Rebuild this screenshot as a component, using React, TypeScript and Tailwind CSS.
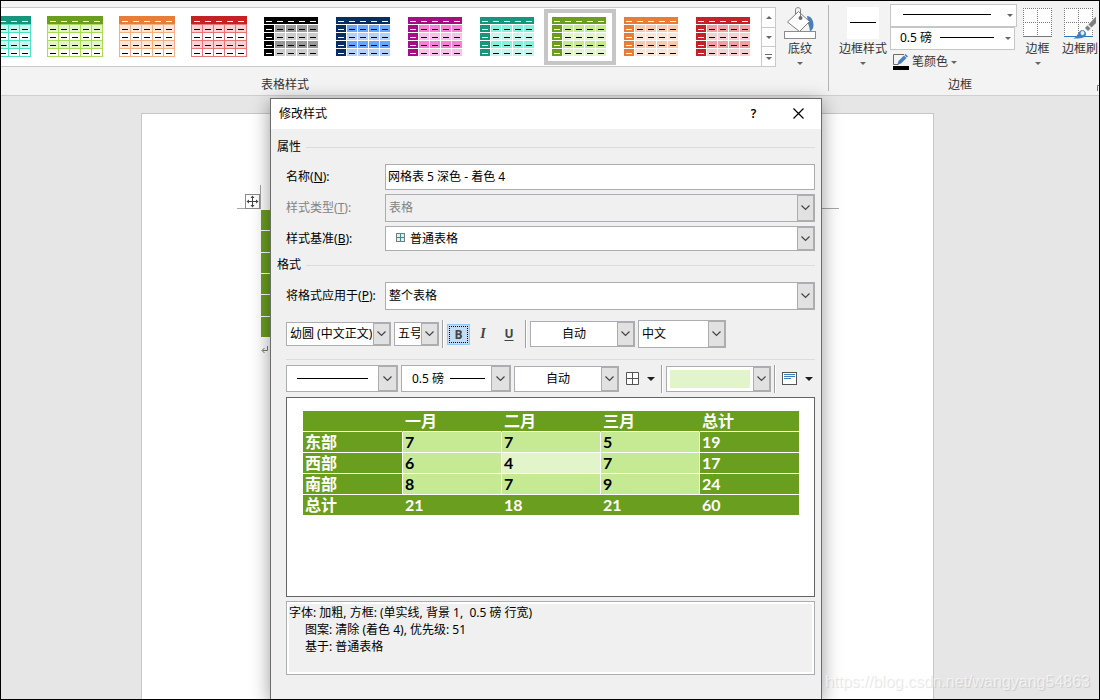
import React from "react";
import clsx from "clsx";

const tableStyles = [
  { id: "t3", kind: "list", main: "#16967d", line: "#4fe0c6", dark: "#c8f5ec", light: "#ffffff" },
  { id: "g3", kind: "list", main: "#6a9e1f", line: "#a9dc5a", dark: "#e2f4ca", light: "#ffffff" },
  { id: "o3", kind: "list", main: "#e87d37", line: "#f1b186", dark: "#fbe5d7", light: "#ffffff" },
  { id: "r3", kind: "list", main: "#c42224", line: "#e57779", dark: "#f7d1d1", light: "#ffffff" },
  { id: "k5", kind: "grid", main: "#000000", dark: "#999999", light: "#cccccc" },
  { id: "b5", kind: "grid", main: "#052f61", dark: "#64a7fb", light: "#b1d2fd" },
  { id: "m5", kind: "grid", main: "#a50e82", dark: "#f481d9", light: "#f9c0ec" },
  { id: "t5", kind: "grid", main: "#16967d", dark: "#89efdd", light: "#c4f7ee" },
  { id: "g5", kind: "grid", main: "#6a9e1f", dark: "#c6ea94", light: "#e2f4ca" },
  { id: "o5", kind: "grid", main: "#e87d37", dark: "#f6cbae", light: "#fbe5d7" },
  { id: "r5", kind: "grid", main: "#c42224", dark: "#efa1a2", light: "#f7d0d1" },
];

const five = [0, 1, 2, 3, 4];
const four = [0, 1, 2, 3];

const StyleThumb = ({ style }: { style: (typeof tableStyles)[number] }) => {
  const grid = style.kind === "grid";
  return (
    <svg width="56" height="41" viewBox="0 0 56 41" shapeRendering="crispEdges">
      {grid ? (
        <>
          <rect x="1" y="1" width="54" height="7" fill={style.main} />
          {four.map((r) =>
            five.map((c) => (
              <rect
                key={`${r}-${c}`}
                x={1 + c * 11}
                y={9 + r * 8}
                width="10"
                height="7"
                fill={c === 0 ? style.main : r % 2 ? style.light : style.dark}
              />
            ))
          )}
        </>
      ) : (
        <>
          <rect width="56" height="41" fill={style.line} />
          {four.map((r) =>
            five.map((c) => (
              <rect
                key={`${r}-${c}`}
                x={1 + c * 11}
                y={9 + r * 8}
                width="10"
                height="7"
                fill={r % 2 ? style.light : style.dark}
              />
            ))
          )}
          <rect width="56" height="8" fill={style.main} />
        </>
      )}
      {five.map((c) => (
        <g key={c}>
          <rect x={3 + c * 11} y="5" width="6" height="1" fill="#fff" />
          {four.map((r) => (
            <rect
              key={r}
              x={3 + c * 11}
              y={13 + r * 8}
              width="6"
              height="1"
              fill={grid && c === 0 ? "#fff" : "#000"}
            />
          ))}
        </g>
      ))}
    </svg>
  );
};

const SmallArrow = ({ className }: { className?: string }) => (
  <svg width="6" height="3" viewBox="0 0 6 3" className={className} fill="#666">
    <path d="M0 0h6L3 3z" />
  </svg>
);

const BigArrow = () => (
  <svg width="8" height="4" viewBox="0 0 8 4" fill="#1e1e1e">
    <path d="M0 0h8L4 4z" />
  </svg>
);

const BucketIcon = () => (
  <svg width="32" height="32" viewBox="0 0 32 32" fill="none">
    <path d="M23 9c4 0 6.500 4 6.500 9 0 3-1 5-3.500 6.500-.5-2.500-.5-5-2-8z" fill="#4a7ebb" />
    <path d="M14.500 4.500L25.500 14.500 15.500 24.500 3.500 15z" fill="#fff" stroke="#7f7f7f" />
    <path d="M11.500 7V2.500c0-2.500 5-2.500 5 0V10" stroke="#7f7f7f" />
    <circle cx="16.500" cy="11" r="2" fill="#6b6b6b" />
    <rect x="0.500" y="24.500" width="31" height="7" fill="#fff" stroke="#8c8c8c" />
  </svg>
);

const BorderStyleIcon = () => (
  <svg width="32" height="32" viewBox="0 0 32 32" shapeRendering="crispEdges">
    <rect width="32" height="32" fill="#fff" />
    <rect x="3" y="15" width="26" height="1" fill="#000" />
  </svg>
);

const DottedGrid = ({ base }: { base: string }) => (
  <g shapeRendering="crispEdges">
    <rect width="29" height="29" y="1" fill="#fff" />
    <path
      d="M0 1.500h29M.5 1v28M28.500 1v28M0 15.500h29M14.500 1v28"
      stroke="#7c7c7c"
      strokeDasharray="1 1"
      fill="none"
    />
    <rect y="29" width="29" height="1" fill={base} />
  </g>
);

const BordersIcon = () => (
  <svg width="29" height="32" viewBox="0 0 29 32">
    <DottedGrid base="#777" />
  </svg>
);

const BorderPainterIcon = () => (
  <svg width="33" height="32" viewBox="0 0 33 32">
    <DottedGrid base="#2e75b6" />
    <path d="M33 8v10l-8 8-5-5z" fill="#f3f3f3" />
    <path d="M32 9.500v6.500l-4.500 4.500L24.500 17.500z" fill="#7f7f7f" />
    <path d="M23.500 18.500l3 3-2.500 2.500-3-3z" fill="#7f7f7f" />
    <path
      d="M9 31.500c4-1 4.500-5 7-7.500 2-1.500 6.500 0 6 3.500-.5 3-5 4.500-13 4z"
      fill="#3f7fc0"
    />
    <circle cx="18.500" cy="26" r="2.500" fill="#e4effa" stroke="#3f7fc0" />
  </svg>
);

const PenColorIcon = () => (
  <svg width="16" height="16" viewBox="0 0 16 16">
    <path d="M11 .5H.5v10h5" fill="none" stroke="#6b6b6b" />
    <path d="M4.500 10.500l1-3.500L11 1.500l2.500 2.500L8 9.500z" fill="#4a7ebb" />
    <path d="M12 .5l2.500 2.500" stroke="#4a7ebb" strokeWidth="1.500" />
    <rect y="12" width="16" height="4" fill="#000" />
  </svg>
);

const RibbonButton = ({
  icon,
  label,
  arrow = true,
  className,
}: {
  icon: React.ReactNode;
  label: string;
  arrow?: boolean;
  className?: string;
}) => (
  <button className={clsx("mt-[6px] flex shrink-0 flex-col items-center", className)}>
    <span className="flex h-8 justify-center">{icon}</span>
    <span className="mt-[2px] whitespace-nowrap leading-4">{label}</span>
    {arrow && <SmallArrow className="mt-[5px]" />}
  </button>
);

const Ribbon = () => (
  <div className="flex h-[95px] shrink-0 border-b border-[#cfcfcf] bg-[#f3f3f3] text-[#333]">
    <div className="flex min-w-0 flex-1 flex-col">
      <div className="flex h-[76px] items-start">
        <div className="mt-[6px] flex h-[60px] min-w-0 flex-1 border border-l-0 border-[#c9c9c9] bg-white">
          <div className="flex min-w-0 flex-1 justify-end overflow-hidden pt-px pr-px">
            {tableStyles.map((s) => (
              <button
                key={s.id}
                aria-label={s.id}
                className={clsx(
                  "flex h-14 w-[72px] shrink-0 pt-[7px] pl-[7px]",
                  s.id === "g5" && "ring-4 ring-[#c6c6c6] ring-inset"
                )}
              >
                <StyleThumb style={s} />
              </button>
            ))}
          </div>
          <div className="flex w-[14px] shrink-0 flex-col border-l border-[#c9c9c9]">
            <button aria-label="上一行" className="flex flex-1 items-center justify-center border-b border-[#c9c9c9]">
              <SmallArrow className="rotate-180" />
            </button>
            <button aria-label="下一行" className="flex flex-1 items-center justify-center border-b border-[#c9c9c9]">
              <SmallArrow />
            </button>
            <button aria-label="其他" className="flex flex-1 flex-col items-center justify-center gap-[2px]">
              <span className="h-px w-[7px] bg-[#6b6b6b]" />
              <SmallArrow />
            </button>
          </div>
        </div>
        <RibbonButton icon={<BucketIcon />} label="底纹" className="mr-1 w-12" />
      </div>
      <div className="pl-[260px] leading-4">表格样式</div>
    </div>
    <div className="my-1 w-px bg-[#b5b5b5]" />
    <div className="flex w-[270px] shrink-0 flex-col overflow-hidden">
      <div className="flex h-[76px] items-start">
        <RibbonButton icon={<BorderStyleIcon />} label="边框样式" className="ml-[9px] w-[50px]" />
        <div className="mt-[3px] ml-[2px] w-[127px] shrink-0">
          <div className="relative">
            <select aria-label="笔样式" className="block h-[23px] w-full appearance-none border border-[#c6c6c6] bg-white">
              <option value="single"></option>
            </select>
            <span className="pointer-events-none absolute top-[10px] left-[13px] h-px w-[88px] bg-black" />
            <SmallArrow className="pointer-events-none absolute top-[10px] right-1" />
          </div>
          <div className="relative mr-[2px]">
            <select aria-label="笔划粗细" className="block h-[23px] w-full appearance-none border border-[#c6c6c6] bg-white pb-px pl-[9px] leading-4 text-black">
              <option>0.5 磅</option>
            </select>
            <span className="pointer-events-none absolute top-[10px] left-[50px] h-px w-[54px] bg-black" />
            <SmallArrow className="pointer-events-none absolute top-[10px] right-1" />
          </div>
          <button className="mt-[3px] ml-[3px] flex items-center gap-[3px] leading-[18px]">
            <PenColorIcon />
            笔颜色
            <SmallArrow />
          </button>
        </div>
        <RibbonButton icon={<BordersIcon />} label="边框" className="ml-[6px] w-[29px]" />
        <RibbonButton icon={<BorderPainterIcon />} label="边框刷" arrow={false} className="ml-[10px] w-9" />
      </div>
      <div className="flex pl-[119px] leading-4">
        边框
        <svg width="5" height="6" viewBox="0 0 5 6" fill="none" stroke="#777" className="mt-2 ml-auto">
          <path d="M3.500 6V.5H5" />
        </svg>
      </div>
    </div>
  </div>
);

const DocumentPage = () => (
  <div className="relative mt-[17px] mr-[165px] ml-[140px] flex-1 border border-b-0 border-[#c6c6c6] bg-white pt-24 pl-[119px]">
    {/* crop marks and the table move handle */}
    <span className="absolute top-[71px] left-[118px] h-[24px] w-px bg-[#a6a6a6]" />
    <span className="absolute top-[94px] left-[95px] h-px w-[24px] bg-[#a6a6a6]" />
    <span className="absolute top-[94px] right-[94px] h-px w-[24px] bg-[#a6a6a6]" />
    <svg
      width="15"
      height="15"
      viewBox="0 0 15 15"
      fill="none"
      className="absolute top-[80px] left-[103px]"
    >
      <rect x="0.500" y="0.500" width="14" height="14" fill="#fff" stroke="#8a8a8a" />
      <path d="M7.500 3v9M3 7.500h9" stroke="#444" />
      <path d="M7.500 1.500l2 2.500h-4zM7.500 13.500l2-2.500h-4zM1.500 7.500l2.500-2v4zM13.500 7.500l-2.500-2v4z" fill="#444" />
    </svg>
    <div className="mr-[118px] flex h-[127px] flex-col gap-px">
      {[0, 1, 2, 3, 4, 5].map((r) => (
        <div key={r} className="flex-1 bg-[#6a9e1f]" />
      ))}
    </div>
    <svg width="9" height="8" viewBox="0 0 9 8" fill="none" stroke="#777" className="mt-[9px]">
      <path d="M6.500 0v4.500H1.500M3.500 2L1 4.500 3.500 7" />
    </svg>
  </div>
);

const Combo = ({
  label,
  id,
  value,
  className,
  selectClass = "pl-[3px]",
  disabled,
  wideArrow,
  children,
}: {
  label?: string;
  id?: string;
  value: string;
  className: string;
  selectClass?: string;
  disabled?: boolean;
  wideArrow?: boolean;
  children?: React.ReactNode;
}) => (
  <div className={clsx("relative", className)}>
    <select
      id={id}
      aria-label={label}
      disabled={disabled}
      className={clsx(
        "block h-full w-full appearance-none border border-[#abadb3] pr-[18px] leading-4 disabled:opacity-100",
        disabled ? "bg-[#f0f0f0] text-[#838383]" : "bg-white text-black",
        selectClass
      )}
    >
      <option>{value}</option>
    </select>
    {children}
    <span
      className={clsx(
        "pointer-events-none absolute top-px right-0 bottom-0 flex items-center justify-center border border-r-2 border-b-2 border-[#adadad] bg-[#e1e1e1]",
        wideArrow ? "w-5" : "w-[18px]"
      )}
    >
      <svg width="9" height="6" viewBox="0 0 9 6" fill="none" stroke="#444" strokeWidth="1.200">
        <path d="M.5 .5l4 4 4-4" />
      </svg>
    </span>
  </div>
);

const Heading = ({ children }: { children: React.ReactNode }) => (
  <div className="flex items-center gap-[5px] pl-[6px]">
    <h2 className="leading-[18px]">{children}</h2>
    <span className="h-px flex-1 bg-[#dcdcdc]" />
  </div>
);

const FieldLabel = ({
  htmlFor,
  text,
  hotkey,
  className,
}: {
  htmlFor: string;
  text: string;
  hotkey: string;
  className?: string;
}) => (
  <label htmlFor={htmlFor} className={clsx("w-[99px] shrink-0 whitespace-nowrap leading-4", className)}>
    {text}(<span className="underline">{hotkey}</span>):
  </label>
);

const Divider = () => <span className="h-7 w-[2px] border-l border-[#a0a0a0] bg-white" />;

const previewRows = [
  ["", "一月", "二月", "三月", "总计"],
  ["东部", "7", "7", "5", "19"],
  ["西部", "6", "4", "7", "17"],
  ["南部", "8", "7", "9", "24"],
  ["总计", "21", "18", "21", "60"],
];

const Preview = () => (
  <div className="mt-[5px] h-[200px] border border-[#646464] bg-white pt-[13px] pr-[15px] pl-4">
    <table className="w-full table-fixed border-separate border-spacing-0 font-['Lato','Noto_Sans_CJK_SC',sans-serif] text-base leading-5 font-bold">
      <colgroup>
        <col className="w-[99px]" />
        <col className="w-[99px]" />
        <col className="w-[99px]" />
        <col className="w-[99px]" />
        <col />
      </colgroup>
      <tbody>
        {previewRows.map((row, r) => (
          <tr key={r}>
            {row.map((cell, c) => {
              const body = r > 0 && r < 4 && c > 0 && c < 4;
              return (
                <td
                  key={c}
                  className={clsx(
                    "h-5 p-0",
                    r < 4 && "border-b border-b-white",
                    c > 0 && "border-l",
                    "pl-[2px]",
                    r > 0 && r < 4 ? "border-l-white" : "border-l-[#6a9e1f]",
                    body ? "text-black" : "bg-[#6a9e1f] text-white",
                    body && (r === 2 && c === 2 ? "bg-[#e2f4ca]" : "bg-[#c6ea94]")
                  )}
                >
                  {cell}
                </td>
              );
            })}
          </tr>
        ))}
      </tbody>
    </table>
  </div>
);

const ModifyStyleDialog = () => (
  <div
    role="dialog"
    aria-label="修改样式"
    className="absolute top-[97px] bottom-0 left-[269px] w-[552px] border border-b-0 border-[#6b6b6b] bg-[#f0f0f0] text-black shadow-[0_4px_18px_rgba(0,0,0,0.4)]"
  >
    <div className="flex h-[30px] items-center bg-white pl-2">
      <h1 className="flex-1">修改样式</h1>
      <button className="w-[45px] text-center text-xs font-semibold" aria-label="帮助">
        ?
      </button>
      <button className="flex w-[45px] justify-center pb-px" aria-label="关闭">
        <svg width="11" height="11" viewBox="0 0 11 11" stroke="#000" strokeWidth="1.200" fill="none">
          <path d="M.5 .5l10 10M10.500 .5l-10 10" />
        </svg>
      </button>
    </div>

    <div className="pt-[9px] pr-[6px]">
      <Heading>属性</Heading>
      <div className="mt-2 flex flex-col gap-1 pl-[15px]">
        <div className="flex items-center">
          <FieldLabel htmlFor="name" text="名称" hotkey="N" />
          <input
            id="name"
            defaultValue="网格表 5 深色 - 着色 4"
            className="h-[26px] min-w-0 flex-1 border border-[#abadb3] bg-white pb-[3px] pl-[2px]"
          />
        </div>
        <div className="flex items-center">
          <FieldLabel htmlFor="type" text="样式类型" hotkey="T" className="text-[#838383]" />
          <Combo id="type" value="表格" disabled className="h-7 flex-1" />
        </div>
        <div className="flex items-center">
          <FieldLabel htmlFor="base" text="样式基准" hotkey="B" />
          <Combo id="base" value="普通表格" className="h-[25px] flex-1" selectClass="pl-6">
            <svg
              width="9"
              height="9"
              viewBox="0 0 9 9"
              fill="none"
              className="pointer-events-none absolute top-[7px] left-[11px]"
            >
              <rect x="0.500" y="0.500" width="8" height="8" fill="#e4eeee" stroke="#7a7a7a" />
              <path d="M4.500 1v7M1 4.500h7" stroke="#2f8f8f" />
            </svg>
          </Combo>
        </div>
      </div>
    </div>

    <div className="pt-[5px] pr-[6px]">
      <Heading>格式</Heading>
      <div className="mt-2 pl-[15px]">
        <div className="flex items-center">
          <FieldLabel htmlFor="apply" text="将格式应用于" hotkey="P" />
          <Combo id="apply" value="整个表格" className="h-7 flex-1" />
        </div>

        <div className="mt-[10px] flex h-7 items-center gap-[3px]">
          <Combo label="字体" value="幼圆 (中文正文)" className="h-6 w-[105px]" />
          <Combo label="字号" value="五号" className="h-6 w-[45px]" />
          <Divider />
          <div className="flex items-center font-['Open_Sans',sans-serif] font-bold text-[#444]">
            <button className="h-[21px] w-[23px] border border-[#90c8f6] bg-[#c2dcf3] p-px leading-4">
              <span className="block h-[17px] border border-dotted border-black leading-[15px]">B</span>
            </button>
            <button className="w-[26px] font-['Liberation_Serif',serif] text-sm leading-4 italic">I</button>
            <button className="w-[26px] leading-4 underline underline-offset-2">U</button>
          </div>
          <Divider />
          <Combo label="字体颜色" value="自动" className="h-[26px] w-[105px]" selectClass="pl-[31px]" />
          <Combo label="语言" value="中文" className="h-7 w-[88px]" />
        </div>

        <div className="mt-[11px] h-px bg-[#dcdcdc]" />

        <div className="mt-[5px] flex h-[27px] items-center gap-[3px]">
          <Combo label="线型" value="" wideArrow className="h-[27px] w-28">
            <span className="pointer-events-none absolute top-[13px] left-[11px] h-px w-[71px] bg-black" />
          </Combo>
          <Combo label="线宽" value="0.5 磅" wideArrow className="h-[27px] w-[110px]" selectClass="pl-[10px]">
            <span className="pointer-events-none absolute top-[13px] left-[49px] h-px w-[35px] bg-black" />
          </Combo>
          <Combo label="边框颜色" value="自动" className="h-[26px] w-[105px]" selectClass="pl-[31px]" />
          <button aria-label="边框" className="flex w-9 items-center gap-2 pl-1">
            <svg width="13" height="13" viewBox="0 0 13 13" fill="#fff" stroke="#555">
              <path d="M.5 .5h12v12H.5zM6.500 .5v12M.5 6.500h12" />
            </svg>
            <BigArrow />
          </button>
          <Divider />
          <Combo label="填充颜色" value="" className="h-[26px] w-[105px]">
            <span className="pointer-events-none absolute top-1 bottom-1 left-1 w-20 bg-[#e2f4ca]" />
          </Combo>
          <Divider />
          <button aria-label="对齐方式" className="flex w-9 items-center gap-2 pl-[3px]">
            <svg width="15" height="13" viewBox="0 0 15 13" fill="none">
              <rect x="0.500" y="0.500" width="14" height="12" fill="#fff" stroke="#555" />
              <path d="M2 2.500h11M2 4.500h11M2 6.500h7" stroke="#3f7fc0" />
            </svg>
            <BigArrow />
          </button>
        </div>

        <Preview />

        <div className="mt-1 h-[74px] border border-[#abadb3] bg-white p-[2px]">
          <div className="h-full bg-[#f0f0f0] leading-[17px] whitespace-pre">
            <p>字体: 加粗, 方框: (单实线, 背景 1,  0.5 磅 行宽)</p>
            <p className="pl-4">图案: 清除 (着色 4), 优先级: 51</p>
            <p className="pl-4">基于: 普通表格</p>
          </div>
        </div>
      </div>
    </div>
  </div>
);

export default function App() {
  return (
    <div className="relative flex h-screen flex-col overflow-hidden border border-black bg-[#e6e6e6] font-['Noto_Sans','Noto_Sans_CJK_SC',sans-serif] text-xs">
      <Ribbon />
      <DocumentPage />
      <ModifyStyleDialog />
      <div className="absolute right-[9px] bottom-[7px] font-['Liberation_Sans',sans-serif] text-base leading-5 text-white/60 [text-shadow:1px_1px_1px_rgba(0,0,0,0.12)]">
        https://blog.csdn.net/wangyang54863
      </div>
    </div>
  );
}
